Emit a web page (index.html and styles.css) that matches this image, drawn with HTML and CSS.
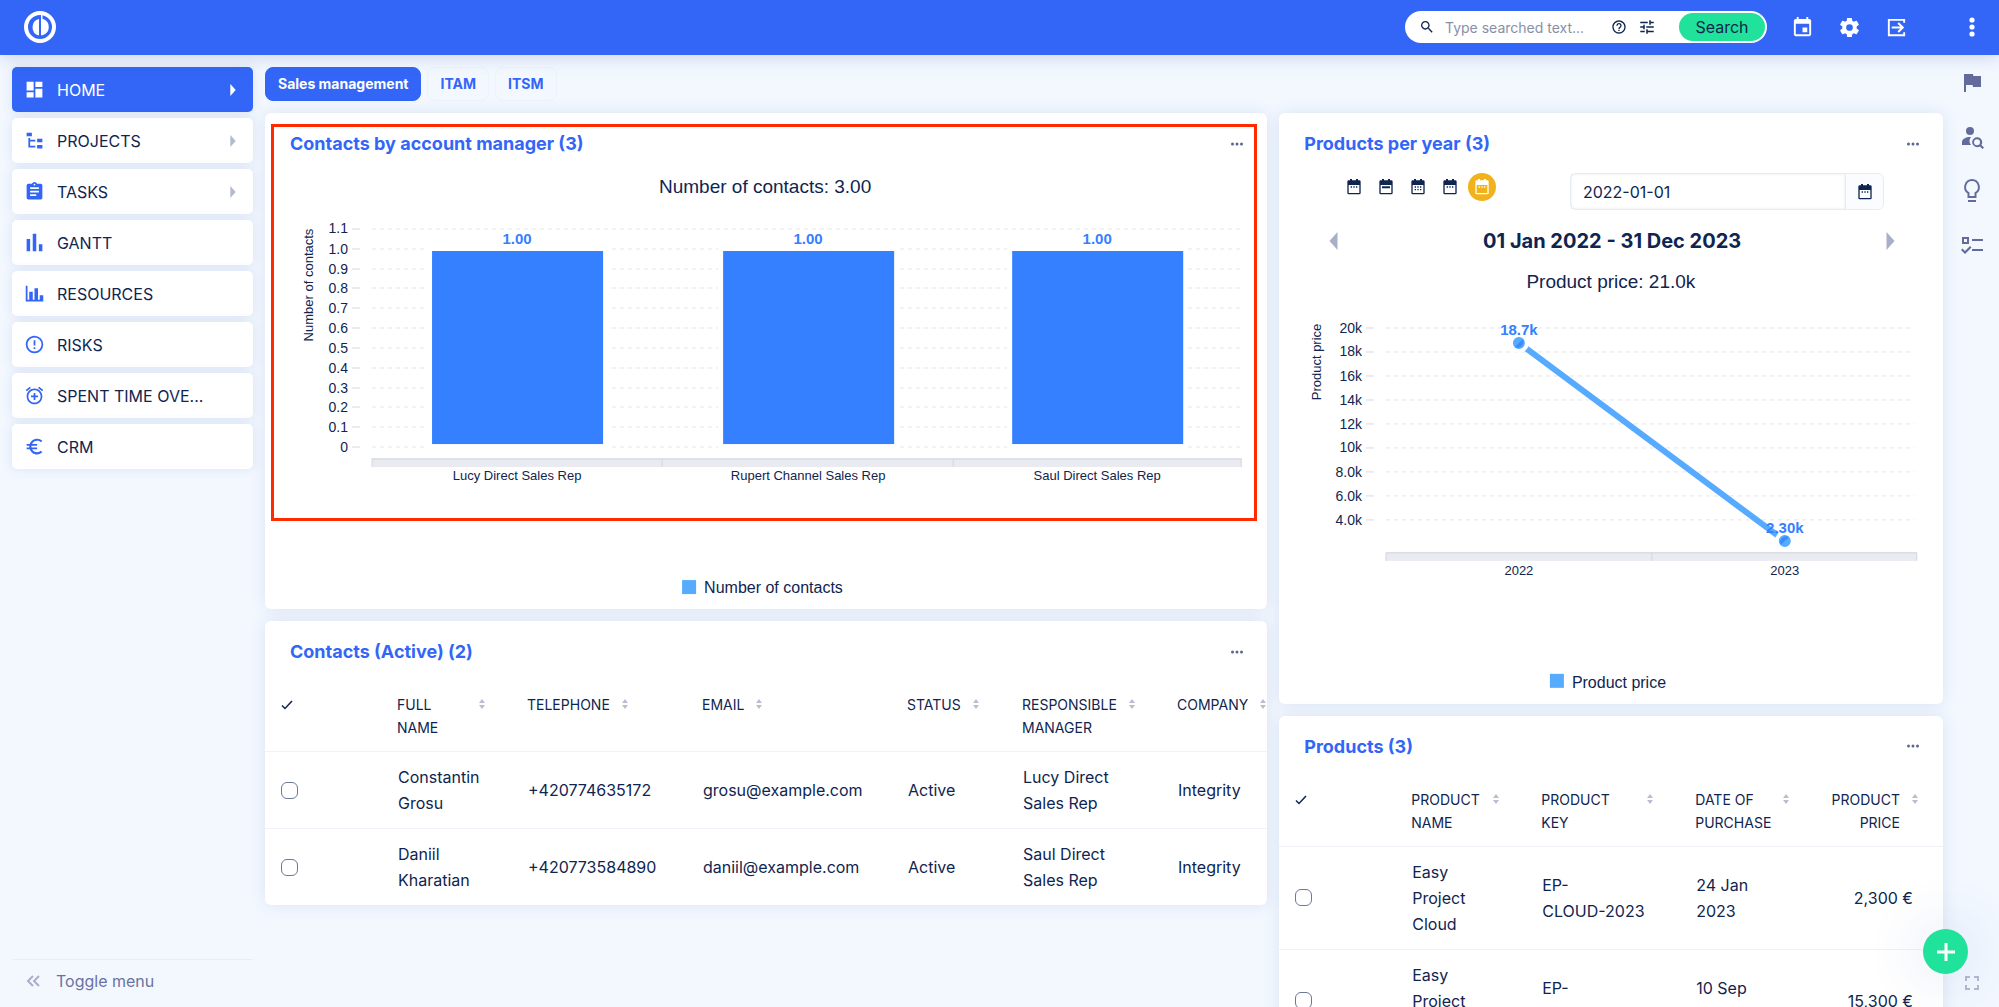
FILE: index.html
```html
<!DOCTYPE html>
<html lang="en">
<head>
    <meta charset="UTF-8">
    <meta name="viewport" content="width=device-width, initial-scale=1.0">
    <title>Sales management</title>
    <link rel="stylesheet" href="styles.css">
</head>
<body>

    <!-- Shared icons -->
    <svg class="icon-defs" aria-hidden="true">
        <symbol id="icon-sort" viewBox="0 0 6 10">
            <path d="M3 0L6 4H0zM3 10L0 6H6z"/>
        </symbol>
        <symbol id="icon-more" viewBox="0 0 12 4">
            <circle cx="1.500" cy="2" r="1.500"/><circle cx="6" cy="2" r="1.500"/><circle cx="10.500" cy="2" r="1.500"/>
        </symbol>
        <symbol id="icon-arrow" viewBox="0 0 8 18">
            <path d="M0 0L8 9L0 18z"/>
        </symbol>
        <symbol id="icon-check" viewBox="0 0 12 10">
            <path d="M1 5.500L4 8.500L11 1" fill="none" stroke="currentColor" stroke-width="1.500"/>
        </symbol>
        <symbol id="icon-calendar" viewBox="0 0 24 24">
            <path d="M6 0v2H4a2 2 0 0 0-2 2v17a2 2 0 0 0 2 2h16a2 2 0 0 0 2-2V4a2 2 0 0 0-2-2h-2V0h-3v2H9V0zM4 9h16v12H4z"/>
        </symbol>
    </svg>

    <header class="topbar">
        <a href="#" class="logo" aria-label="Home page">
            <svg viewBox="0 0 32 32" width="32" height="32">
                <circle cx="16" cy="16" r="14" fill="none" stroke="#fff" stroke-width="4"/>
                <path d="M15 8v16.500a8.500 8.500 0 0 1 0-16.500zM17 4h1.500v3.800a8.500 8.500 0 0 1 0 16.400H17z" fill="#fff"/>
            </svg>
        </a>
        <form class="search">
            <svg class="icon" viewBox="0 0 24 24" width="16" height="16"><path d="M15.500 14h-.79l-.28-.27C15.410 12.590 16 11.110 16 9.500 16 5.910 13.090 3 9.500 3S3 5.910 3 9.500 5.910 16 9.500 16c1.610 0 3.090-.59 4.230-1.570l.27.28v.79l5 4.990L20.490 19l-4.990-5zm-6 0C7.010 14 5 11.990 5 9.500S7.010 5 9.500 5 14 7.010 14 9.500 11.990 14 9.500 14z"/></svg>
            <input type="text" placeholder="Type searched text..." aria-label="Search">
            <button type="button" class="icon-btn" aria-label="Help"><svg class="icon" viewBox="0 0 24 24" width="16" height="16"><path d="M11 18h2v-2h-2v2zm1-16C6.480 2 2 6.480 2 12s4.480 10 10 10 10-4.480 10-10S17.520 2 12 2zm0 18c-4.410 0-8-3.590-8-8s3.590-8 8-8 8 3.590 8 8-3.590 8-8 8zm0-14c-2.210 0-4 1.790-4 4h2c0-1.100.9-2 2-2s2 .9 2 2c0 2-3 1.750-3 5h2c0-2.250 3-2.500 3-5 0-2.210-1.790-4-4-4z"/></svg></button>
            <button type="button" class="icon-btn" aria-label="Filters"><svg class="icon" viewBox="0 0 24 24" width="18" height="18"><path d="M3 17v2h6v-2H3zM3 5v2h10V5H3zm10 16v-2h8v-2h-8v-2h-2v6h2zM7 9v2H3v2h4v2h2V9H7zm14 4v-2H11v2h10zm-6-4h2V7h4V5h-4V3h-2v6z"/></svg></button>
            <button type="button" class="search-btn">Search</button>
        </form>
        <nav class="top-actions">
            <a href="#" aria-label="Calendar"><svg viewBox="0 0 24 24" width="23" height="23"><path d="M17 12h-5v5h5v-5zM16 1v2H8V1H6v2H5c-1.110 0-1.990.9-1.990 2L3 19c0 1.100.89 2 2 2h14c1.100 0 2-.9 2-2V5c0-1.100-.9-2-2-2h-1V1h-2zm3 18H5V8h14v11z"/></svg></a>
            <a href="#" aria-label="Administration"><svg viewBox="0 0 24 24" width="23" height="23"><path d="M12,15.500A3.500,3.500 0 0,1 8.500,12A3.500,3.500 0 0,1 12,8.500A3.500,3.500 0 0,1 15.500,12A3.500,3.500 0 0,1 12,15.500M19.430,12.970C19.470,12.650 19.500,12.330 19.500,12C19.500,11.670 19.470,11.340 19.430,11L21.540,9.370C21.730,9.220 21.780,8.950 21.660,8.730L19.660,5.270C19.540,5.050 19.270,4.960 19.050,5.050L16.560,6.050C16.040,5.660 15.500,5.320 14.870,5.070L14.500,2.420C14.460,2.180 14.250,2 14,2H10C9.750,2 9.540,2.180 9.500,2.420L9.130,5.070C8.500,5.320 7.960,5.660 7.440,6.050L4.950,5.050C4.730,4.960 4.460,5.050 4.340,5.270L2.340,8.730C2.210,8.950 2.270,9.220 2.460,9.370L4.570,11C4.530,11.340 4.500,11.670 4.500,12C4.500,12.330 4.530,12.650 4.570,12.970L2.460,14.630C2.270,14.780 2.210,15.050 2.340,15.270L4.340,18.730C4.460,18.950 4.730,19.030 4.950,18.950L7.440,17.940C7.960,18.340 8.500,18.680 9.130,18.930L9.500,21.580C9.540,21.820 9.750,22 10,22H14C14.250,22 14.460,21.820 14.500,21.580L14.870,18.930C15.500,18.670 16.040,18.340 16.560,17.940L19.050,18.950C19.270,19.030 19.540,18.950 19.660,18.730L21.660,15.270C21.780,15.050 21.730,14.780 21.540,14.630L19.430,12.970Z"/></svg></a>
            <a href="#" aria-label="Sign out"><svg viewBox="0 0 24 24" width="23" height="23"><path d="M21 7V3H3v18h18v-4h-2v2H5V5h14v2zM7 11v2h9l-3 3 1.500 1.500L20 12l-5.500-5.500L13 8l3 3z"/></svg></a>
        </nav>
        <button type="button" class="kebab" aria-label="More"><svg viewBox="0 0 6 20" width="6" height="20"><circle cx="3" cy="3" r="2.600"/><circle cx="3" cy="10" r="2.600"/><circle cx="3" cy="17" r="2.600"/></svg></button>
    </header>

    <div class="layout">
        <aside class="sidebar">
            <nav class="menu">
                <a href="#" class="menu-item active">
                    <svg viewBox="0 0 24 24"><path d="M13,3V9H21V3M13,21H21V11H13M3,21H11V15H3M3,13H11V3H3V13Z"/></svg>
                    <span>HOME</span>
                    <svg class="expand"><use href="#icon-arrow"/></svg>
                </a>
                <a href="#" class="menu-item">
                    <svg viewBox="0 0 24 24"><path d="M3,3H9V7H3V3M15,10H21V14H15V10M15,17H21V21H15V17M13,13H7V18H13V20H7L5,20V9H7V11H13V13Z"/></svg>
                    <span>PROJECTS</span>
                    <svg class="expand"><use href="#icon-arrow"/></svg>
                </a>
                <a href="#" class="menu-item">
                    <svg viewBox="0 0 24 24"><path d="M17,9H7V7H17M17,13H7V11H17M14,17H7V15H14M12,3A1,1 0 0,1 13,4A1,1 0 0,1 12,5A1,1 0 0,1 11,4A1,1 0 0,1 12,3M19,3H14.820C14.400,1.840 13.300,1 12,1C10.700,1 9.600,1.840 9.180,3H5A2,2 0 0,0 3,5V19A2,2 0 0,0 5,21H19A2,2 0 0,0 21,19V5A2,2 0 0,0 19,3Z"/></svg>
                    <span>TASKS</span>
                    <svg class="expand"><use href="#icon-arrow"/></svg>
                </a>
                <a href="#" class="menu-item">
                    <svg viewBox="0 0 24 24"><path d="M3,22V8H7V22H3M10,22V2H14V22H10M17,22V14H21V22H17Z"/></svg>
                    <span>GANTT</span>
                </a>
                <a href="#" class="menu-item">
                    <svg viewBox="0 0 24 24"><path d="M22,21H2V3H4V19H6V10H10V19H12V6H16V19H18V14H22V21Z"/></svg>
                    <span>RESOURCES</span>
                </a>
                <a href="#" class="menu-item">
                    <svg viewBox="0 0 24 24"><path d="M11,15H13V17H11V15M11,7H13V13H11V7M12,2C6.470,2 2,6.500 2,12A10,10 0 0,0 12,22A10,10 0 0,0 22,12A10,10 0 0,0 12,2M12,20A8,8 0 0,1 4,12A8,8 0 0,1 12,4A8,8 0 0,1 20,12A8,8 0 0,1 12,20Z"/></svg>
                    <span>RISKS</span>
                </a>
                <a href="#" class="menu-item">
                    <svg viewBox="0 0 24 24"><path d="M7.880 3.390L6.600 1.860 2 5.710l1.290 1.530 4.590-3.850zM22 5.720l-4.600-3.860-1.290 1.530 4.600 3.860L22 5.720zM12 4c-4.970 0-9 4.030-9 9s4.020 9 9 9c4.970 0 9-4.030 9-9s-4.030-9-9-9zm0 16c-3.870 0-7-3.130-7-7s3.130-7 7-7 7 3.130 7 7-3.130 7-7 7zm1-11h-2v3H8v2h3v3h2v-3h3v-2h-3V9z"/></svg>
                    <span>SPENT TIME OVE...</span>
                </a>
                <a href="#" class="menu-item">
                    <svg viewBox="0 0 24 24"><path d="M15 18.500c-2.510 0-4.680-1.420-5.760-3.500H15v-2H8.580c-.05-.33-.08-.66-.08-1s.03-.67.08-1H15V9H9.240C10.320 6.920 12.500 5.500 15 5.500c1.610 0 3.090.59 4.230 1.570L21 5.300C19.410 3.870 17.300 3 15 3c-3.920 0-7.240 2.510-8.480 6H3v2h3.060c-.04.33-.06.66-.06 1s.02.67.06 1H3v2h3.520c1.240 3.490 4.560 6 8.480 6 2.310 0 4.410-.87 6-2.300l-1.780-1.770c-1.130.98-2.600 1.570-4.220 1.570z"/></svg>
                    <span>CRM</span>
                </a>
            </nav>
            <button type="button" class="toggle-menu">
                <svg viewBox="0 0 18 12" width="18" height="12"><path d="M8 1L3 6l5 5M14 1L9 6l5 5" fill="none" stroke="currentColor" stroke-width="2"/></svg>
                Toggle menu
            </button>
        </aside>

        <main class="content">
            <nav class="tabs">
                <a href="#" class="tab active">Sales management</a>
                <a href="#" class="tab">ITAM</a>
                <a href="#" class="tab">ITSM</a>
            </nav>

            <div class="columns">
                <div class="column">
                    <section class="card highlighted">
                        <div class="card-header">
                            <h2>Contacts by account manager (3)</h2>
                            <button type="button" class="more" aria-label="Options"><svg><use href="#icon-more"/></svg></button>
                        </div>
                        <svg class="chart" viewBox="0 0 1002 436">
                            <text class="chart-title" x="500" y="20">Number of contacts: 3.00</text>
                            <text class="axis-title" transform="translate(48 112) rotate(-90)">Number of contacts</text>
                            <g class="grid">
                                <path d="M107 56H976M107 76H976M107 96H976M107 115H976M107 135H976M107 155H976M107 175H976M107 195H976M107 215H976M107 234H976M107 254H976M107 274H976"/>
                            </g>
                            <g class="ticks">
                                <path d="M87 56H95M87 76H95M87 96H95M87 115H95M87 135H95M87 155H95M87 175H95M87 195H95M87 215H95M87 234H95M87 254H95M87 274H95"/>
                            </g>
                            <g class="y-labels">
                                <text x="83" y="60">1.1</text>
                                <text x="83" y="81">1.0</text>
                                <text x="83" y="101">0.9</text>
                                <text x="83" y="120">0.8</text>
                                <text x="83" y="140">0.7</text>
                                <text x="83" y="160">0.6</text>
                                <text x="83" y="180">0.5</text>
                                <text x="83" y="200">0.4</text>
                                <text x="83" y="220">0.3</text>
                                <text x="83" y="239">0.2</text>
                                <text x="83" y="259">0.1</text>
                                <text x="83" y="279">0</text>
                            </g>
                            <g class="bars">
                                <rect x="167" y="78" width="171" height="193"/>
                                <rect x="458" y="78" width="171" height="193"/>
                                <rect x="747" y="78" width="171" height="193"/>
                            </g>
                            <g class="values">
                                <text x="252" y="71">1.00</text>
                                <text x="543" y="71">1.00</text>
                                <text x="832" y="71">1.00</text>
                            </g>
                            <rect class="band" x="107" y="285" width="869" height="9"/>
                            <path class="band-line" d="M107 294V286H976V294M397 286V294M688 286V294"/>
                            <g class="x-labels">
                                <text x="252" y="307">Lucy Direct Sales Rep</text>
                                <text x="543" y="307">Rupert Channel Sales Rep</text>
                                <text x="832" y="307">Saul Direct Sales Rep</text>
                            </g>
                            <rect class="legend-key" x="417" y="407" width="14" height="14"/>
                            <text class="legend" x="439" y="420">Number of contacts</text>
                        </svg>
                    </section>

                    <section class="card">
                        <div class="card-header">
                            <h2>Contacts (Active) (2)</h2>
                            <button type="button" class="more" aria-label="Options"><svg><use href="#icon-more"/></svg></button>
                        </div>
                        <table class="contacts">
                            <colgroup>
                                <col class="col-check"><col class="col-name"><col class="col-phone"><col class="col-email"><col class="col-status"><col class="col-manager"><col>
                            </colgroup>
                            <thead>
                                <tr>
                                    <th aria-label="Select"><svg class="check"><use href="#icon-check"/></svg></th>
                                    <th><a href="#" class="sort"><span>FULL<br>NAME</span><svg><use href="#icon-sort"/></svg></a></th>
                                    <th><a href="#" class="sort"><span>TELEPHONE</span><svg><use href="#icon-sort"/></svg></a></th>
                                    <th><a href="#" class="sort"><span>EMAIL</span><svg><use href="#icon-sort"/></svg></a></th>
                                    <th><a href="#" class="sort"><span>STATUS</span><svg><use href="#icon-sort"/></svg></a></th>
                                    <th><a href="#" class="sort"><span>RESPONSIBLE MANAGER</span><svg><use href="#icon-sort"/></svg></a></th>
                                    <th><a href="#" class="sort"><span>COMPANY</span><svg><use href="#icon-sort"/></svg></a></th>
                                </tr>
                            </thead>
                            <tbody>
                                <tr>
                                    <td><input type="checkbox" aria-label="Constantin Grosu"></td>
                                    <td>Constantin Grosu</td>
                                    <td>+420774635172</td>
                                    <td>grosu@example.com</td>
                                    <td>Active</td>
                                    <td>Lucy Direct Sales Rep</td>
                                    <td>Integrity</td>
                                </tr>
                                <tr>
                                    <td><input type="checkbox" aria-label="Daniil Kharatian"></td>
                                    <td>Daniil Kharatian</td>
                                    <td>+420773584890</td>
                                    <td>daniil@example.com</td>
                                    <td>Active</td>
                                    <td>Saul Direct Sales Rep</td>
                                    <td>Integrity</td>
                                </tr>
                            </tbody>
                        </table>
                    </section>
                </div>

                <div class="column">
                    <section class="card">
                        <div class="card-header">
                            <h2>Products per year (3)</h2>
                            <button type="button" class="more" aria-label="Options"><svg><use href="#icon-more"/></svg></button>
                        </div>
                        <div class="period">
                            <div class="period-types">
                                <button type="button" aria-label="Day"><svg viewBox="0 0 24 24"><use href="#icon-calendar"/><path d="M7 11h2v2H7zM11 11h2v2h-2zM15 11h2v2h-2z"/></svg></button>
                                <button type="button" aria-label="Week"><svg viewBox="0 0 24 24"><use href="#icon-calendar"/><path d="M6 11h12v3H6z"/></svg></button>
                                <button type="button" aria-label="Month"><svg viewBox="0 0 24 24"><use href="#icon-calendar"/><path d="M7 11h2v2H7zM11 11h2v2h-2zM15 11h2v2h-2zM7 15h2v2H7zM11 15h2v2h-2zM15 15h2v2h-2z"/></svg></button>
                                <button type="button" aria-label="Quarter"><svg viewBox="0 0 24 24"><use href="#icon-calendar"/><path d="M7 11h2v2H7zM11 11h2v2h-2zM15 11h2v2h-2z"/></svg></button>
                                <button type="button" class="active" aria-label="Year"><svg viewBox="0 0 24 24"><use href="#icon-calendar"/><path d="M7 11h2v2H7zM11 11h2v2h-2zM15 11h2v2h-2z"/></svg></button>
                            </div>
                            <div class="date-field">
                                <input type="text" value="2022-01-01" aria-label="Start date">
                                <button type="button" aria-label="Pick a date"><svg viewBox="0 0 24 24"><use href="#icon-calendar"/><path d="M7 11h2v2H7zM11 11h2v2h-2zM15 11h2v2h-2z"/></svg></button>
                            </div>
                        </div>
                        <div class="period-nav">
                            <button type="button" class="prev" aria-label="Previous"><svg><use href="#icon-arrow"/></svg></button>
                            <h3>01 Jan 2022 - 31 Dec 2023</h3>
                            <button type="button" aria-label="Next"><svg><use href="#icon-arrow"/></svg></button>
                        </div>
                        <svg class="chart" viewBox="0 0 664 441">
                            <text class="chart-title" x="332" y="25">Product price: 21.0k</text>
                            <text class="axis-title" transform="translate(42 99) rotate(-90)">Product price</text>
                            <g class="grid">
                                <path d="M107 65H636M107 89H636M107 113H636M107 137H636M107 161H636M107 185H636M107 209H636M107 233H636M107 257H636"/>
                            </g>
                            <g class="ticks">
                                <path d="M87 65H95M87 89H95M87 113H95M87 137H95M87 161H95M87 185H95M87 209H95M87 233H95M87 257H95"/>
                            </g>
                            <g class="y-labels">
                                <text x="83" y="70">20k</text>
                                <text x="83" y="93">18k</text>
                                <text x="83" y="118">16k</text>
                                <text x="83" y="142">14k</text>
                                <text x="83" y="166">12k</text>
                                <text x="83" y="189">10k</text>
                                <text x="83" y="214">8.0k</text>
                                <text x="83" y="238">6.0k</text>
                                <text x="83" y="262">4.0k</text>
                            </g>
                            <path class="line" d="M240 80L506 278"/>
                            <circle class="point" cx="240" cy="80" r="8"/>
                            <circle class="point" cx="506" cy="278" r="8"/>
                            <path class="point-half" d="M244 76A6 6 0 0 1 236 84zM502 282A6 6 0 0 1 510 274z"/>
                            <g class="values">
                                <text x="240" y="72">18.7k</text>
                                <text x="506" y="270">2.30k</text>
                            </g>
                            <rect class="band" x="107" y="289" width="531" height="9"/>
                            <path class="band-line" d="M107 298V290H638V298M373 290V298"/>
                            <g class="x-labels">
                                <text x="240" y="312">2022</text>
                                <text x="506" y="312">2023</text>
                            </g>
                            <rect class="legend-key" x="271" y="411" width="14" height="14"/>
                            <text class="legend" x="293" y="425">Product price</text>
                        </svg>
                    </section>

                    <section class="card">
                        <div class="card-header">
                            <h2>Products (3)</h2>
                            <button type="button" class="more" aria-label="Options"><svg><use href="#icon-more"/></svg></button>
                        </div>
                        <table class="products">
                            <colgroup>
                                <col class="col-check"><col class="col-name"><col class="col-key"><col class="col-date"><col>
                            </colgroup>
                            <thead>
                                <tr>
                                    <th aria-label="Select"><svg class="check"><use href="#icon-check"/></svg></th>
                                    <th><a href="#" class="sort"><span>PRODUCT NAME</span><svg><use href="#icon-sort"/></svg></a></th>
                                    <th><a href="#" class="sort"><span>PRODUCT KEY</span><svg><use href="#icon-sort"/></svg></a></th>
                                    <th><a href="#" class="sort"><span>DATE OF PURCHASE</span><svg><use href="#icon-sort"/></svg></a></th>
                                    <th class="num"><a href="#" class="sort"><span>PRODUCT PRICE</span><svg><use href="#icon-sort"/></svg></a></th>
                                </tr>
                            </thead>
                            <tbody>
                                <tr>
                                    <td><input type="checkbox" aria-label="Easy Project Cloud"></td>
                                    <td>Easy Project Cloud</td>
                                    <td class="key">EP-<br>CLOUD-2023</td>
                                    <td>24 Jan 2023</td>
                                    <td class="num">2,300 €</td>
                                </tr>
                                <tr>
                                    <td><input type="checkbox" aria-label="Easy Project Server"></td>
                                    <td>Easy Project Server</td>
                                    <td class="key">EP-<br>SERVER-2022</td>
                                    <td>10 Sep 2022</td>
                                    <td class="num">15,300 €</td>
                                </tr>
                            </tbody>
                        </table>
                    </section>
                </div>
            </div>
        </main>

        <aside class="rail">
            <a href="#" aria-label="Flags"><svg viewBox="0 0 24 24"><path d="M13.400 5L13 3H4v18h2v-7h6.600l.4 2h8V5z"/></svg></a>
            <a href="#" aria-label="Find user"><svg viewBox="0 0 24 24"><circle cx="10" cy="6" r="4"/><path d="M10 12c-4 0-8 2-8 5v3h9a6.500 6.500 0 0 1 0-8zM21.400 19.900a5 5 0 1 0-1.500 1.500l2.600 2.600 1.500-1.500zM17 20.200a3 3 0 1 1 0-6 3 3 0 0 1 0 6z"/></svg></a>
            <a href="#" aria-label="Tips"><svg viewBox="0 0 24 24"><path d="M8 21h8v2H8zM12 0a8 8 0 0 0-4.500 14.500V19h9v-4.500A8 8 0 0 0 12 0zm2.500 13.400V17h-5v-3.600A6 6 0 0 1 12 2a6 6 0 0 1 2.500 11.400z"/></svg></a>
            <a href="#" aria-label="To-do list"><svg viewBox="0 0 24 24"><path d="M2 4v7h7V4zm2 2h3v3H4zM12 6h11v2H12zM12 16h11v2H12zM5 21l-4-4 1.500-1.500L5 18l5-5 1.500 1.500z"/></svg></a>
            <a href="#" class="fullscreen" aria-label="Fullscreen"><svg viewBox="0 0 14 14"><path d="M1 5V1H5M9 1H13V5M13 9V13H9M5 13H1V9" fill="none" stroke="currentColor" stroke-width="2"/></svg></a>
        </aside>
    </div>

    <button type="button" class="add-btn" aria-label="Add"><svg viewBox="0 0 20 20" width="20" height="20"><path d="M10 1V19M1 10H19" stroke="#fff" stroke-width="3"/></svg></button>

</body>
</html>
```
FILE: styles.css
```css
* {
    box-sizing: border-box;
}

body {
    margin: 0;
    height: 100vh;
    overflow: hidden;
    display: flex;
    flex-direction: column;
    font-family: "Inter", sans-serif;
    font-size: 16px;
    color: #0f2550;
    background-color: #f3f8ff;
}

a {
    color: inherit;
    text-decoration: none;
}

button {
    font-family: inherit;
    font-size: inherit;
    color: inherit;
    background: none;
    border: none;
    padding: 0;
    cursor: pointer;
}

svg {
    display: block;
    fill: currentColor;
}

h2, h3 {
    margin: 0;
}

.icon-defs {
    position: absolute;
    width: 0;
    height: 0;
}

/* Top bar */
.topbar {
    display: flex;
    align-items: center;
    flex-shrink: 0;
    height: 55px;
    padding: 0 24px 1px;
    color: #fff;
    background-color: #3366f6;
    box-shadow: 0 2px 16px rgba(30, 60, 130, 0.2);
    z-index: 1;
}

.search {
    display: flex;
    align-items: center;
    width: 362px;
    height: 32px;
    margin-left: auto;
    padding: 2px 2px 2px 14px;
    border-radius: 16px;
    color: #0f2550;
    background-color: #fff;
}

.search input {
    flex: 1;
    min-width: 0;
    padding: 0 0 0 10px;
    font-family: inherit;
    font-size: 14px;
    border: none;
    outline: none;
    background: none;
}

.search input::placeholder {
    color: #8790a8;
}

.icon-btn {
    margin-right: 11px;
}

.search-btn {
    width: 86px;
    height: 28px;
    margin-left: 12px;
    border-radius: 14px;
    background-color: #20e29a;
}

.top-actions {
    display: flex;
    gap: 24px;
    margin: 0 61px 0 24px;
}

/* Page layout */
.layout {
    flex: 1;
    min-height: 0;
    display: flex;
}

.sidebar {
    display: flex;
    flex-direction: column;
    width: 253px;
    flex-shrink: 0;
    padding: 12px 0 0 12px;
}

.menu {
    display: flex;
    flex-direction: column;
    gap: 6px;
}

.menu-item {
    display: flex;
    align-items: center;
    gap: 12px;
    height: 45px;
    padding: 0 17px 0 12px;
    border-radius: 5px;
    background-color: #fff;
    box-shadow: 0 0 12px rgba(40, 80, 160, 0.12);
}

.menu-item svg {
    width: 21px;
    height: 21px;
    color: #3366f6;
}

.menu-item .expand {
    width: 6px;
    height: 12px;
    margin-left: auto;
    color: #b3bad0;
}

.menu-item.active {
    background-color: #3366f6;
}

.menu-item.active,
.menu-item.active svg {
    color: #fff;
}

.toggle-menu {
    display: flex;
    align-items: center;
    gap: 13px;
    height: 48px;
    margin-top: auto;
    padding: 0 0 6px 13px;
    border-top: 1px solid #e9edf4;
    color: #6a72a3;
}

.toggle-menu svg {
    color: #a9afc9;
}

.content {
    flex: 1;
    min-width: 0;
    padding: 12px 0 0 12px;
}

.tabs {
    display: flex;
    gap: 6px;
    margin-bottom: 12px;
}

.tab {
    height: 34px;
    padding: 0 12px;
    font-size: 14px;
    font-weight: 700;
    line-height: 32px;
    color: #3366f6;
    border: 1px solid #edf2fb;
    border-radius: 8px;
}

.tab.active {
    color: #fff;
    border-color: #3366f6;
    background-color: #3366f6;
}

.columns {
    display: grid;
    grid-template-columns: minmax(0, 151fr) minmax(0, 100fr);
    gap: 12px;
    align-items: start;
}

.column {
    display: grid;
    gap: 12px;
}

/* Cards */
.card {
    position: relative;
    overflow: hidden;
    min-width: 0;
    border-radius: 6px;
    background-color: #fff;
    box-shadow: 0 0 16px rgba(40, 80, 160, 0.12);
}

.card.highlighted::after {
    content: "";
    position: absolute;
    inset: 11px 10px 88px 6px;
    border: 3px solid #ff2a00;
    pointer-events: none;
}

.card-header {
    display: flex;
    align-items: center;
    justify-content: space-between;
    height: 60px;
    padding: 1px 24px 0 25px;
}

.card-header h2 {
    font-size: 18px;
    font-weight: 700;
    color: #3366f6;
}

.more {
    color: #5c6590;
}

.more svg {
    width: 12px;
    height: 4px;
}

/* Charts */
.chart {
    width: 100%;
    height: auto;
    font-family: "Liberation Sans", sans-serif;
    font-size: 14px;
}

.chart-title {
    font-size: 19px;
    text-anchor: middle;
}

.axis-title,
.x-labels,
.values {
    text-anchor: middle;
}

.axis-title,
.x-labels {
    font-size: 13px;
}

.y-labels {
    text-anchor: end;
}

.values {
    font-size: 15px;
    font-weight: 700;
    fill: #3580ff;
}

.grid {
    stroke: #e4e5ea;
    stroke-dasharray: 4 4;
}

.ticks {
    stroke: #d5d8e5;
}

.bars rect {
    fill: #3580ff;
    stroke: #fff;
    stroke-width: 10px;
    paint-order: stroke;
}

.band {
    fill: #e9ebf1;
}

.band-line {
    fill: none;
    stroke: #d3d6e0;
}

.line {
    stroke: #57abff;
    stroke-width: 6px;
}

.point {
    fill: #57abff;
    stroke: #fff;
    stroke-width: 4px;
}

.point-half {
    fill: #3a8cff;
}

.legend-key {
    fill: #57abff;
}

.legend {
    font-size: 16px;
}

.period {
    display: flex;
    align-items: flex-start;
    justify-content: space-between;
    height: 48px;
    padding: 0 59px 0 61px;
}

.period-types {
    display: flex;
    gap: 4px;
}

.period-types button,
.date-field button {
    display: flex;
    align-items: center;
    justify-content: center;
    width: 28px;
    height: 28px;
    border-radius: 50%;
}

.period-types svg,
.date-field svg {
    width: 16px;
    height: 16px;
}

.period-types .active {
    color: #fff;
    background-color: #f2b21c;
}

.date-field {
    display: flex;
    width: 314px;
    height: 37px;
    border: 1px solid #e6ebf5;
    border-radius: 6px;
}

.date-field input {
    flex: 1;
    min-width: 0;
    padding: 0 12px;
    font-family: inherit;
    font-size: 16px;
    color: inherit;
    border: none;
    outline: none;
    background: none;
    box-shadow: inset 0 0 3px rgba(40, 80, 160, 0.12);
}

.date-field button {
    width: 38px;
    height: 35px;
    border-left: 1px solid #e6ebf5;
    border-radius: 0 6px 6px 0;
    background-color: #fbfcff;
}

.period-nav {
    display: flex;
    align-items: center;
    justify-content: space-between;
    height: 42px;
    padding: 0 48px 2px 50px;
}

.period-nav h3 {
    font-size: 20px;
    font-weight: 700;
}

.period-nav svg {
    width: 9px;
    height: 18px;
    color: #a9afc9;
}

.prev {
    transform: rotate(180deg);
}

/* Tables */
table {
    width: 100%;
    table-layout: fixed;
    border-collapse: collapse;
}

.contacts {
    min-width: 1032px;
}

.col-check { width: 120px; }
.col-name { width: 130px; }
.col-phone { width: 175px; }
.col-email { width: 205px; }
.col-status { width: 115px; }
.col-manager { width: 155px; }
.col-key { width: 154px; }
.col-date { width: 136px; }

th, td {
    padding: 12px 30px 12px 12px;
    text-align: left;
    line-height: 26px;
}

th {
    font-size: 14px;
    font-weight: 400;
    line-height: 23px;
    vertical-align: top;
}

td {
    padding-left: 13px;
    border-top: 1px solid #eff2f7;
}

th:first-child,
td:first-child {
    padding-left: 16px;
}

.sort {
    display: flex;
    gap: 12px;
}

.col-name ~ .sort,
th:nth-child(2) .sort {
    justify-content: space-between;
}

.sort svg {
    flex-shrink: 0;
    width: 6px;
    height: 10px;
    margin-top: 6px;
    color: #b7becf;
}

.check {
    width: 12px;
    height: 10px;
    margin-top: 7px;
}

.key {
    white-space: nowrap;
}

.num {
    text-align: right;
}

.num .sort {
    justify-content: flex-end;
}

th.num {
    padding-right: 25px;
}

input[type="checkbox"] {
    appearance: none;
    display: block;
    width: 17px;
    height: 17px;
    margin: 0;
    border: 1px solid #6d7896;
    border-radius: 6px;
    background-color: #fff;
}

/* Right rail */
.rail {
    display: flex;
    flex-direction: column;
    align-items: center;
    gap: 30px;
    width: 56px;
    padding: 16px 0 17px 2px;
    color: #626b9c;
}

.rail svg {
    width: 24px;
    height: 24px;
}

.rail .fullscreen {
    margin-top: auto;
    color: #b3bad0;
}

.rail .fullscreen svg {
    width: 14px;
    height: 14px;
}

.add-btn {
    position: fixed;
    right: 31px;
    bottom: 33px;
    display: flex;
    align-items: center;
    justify-content: center;
    width: 45px;
    height: 45px;
    border-radius: 50%;
    background-color: #20e29a;
    box-shadow: 0 0 60px rgba(40, 80, 160, 0.2);
}
```
